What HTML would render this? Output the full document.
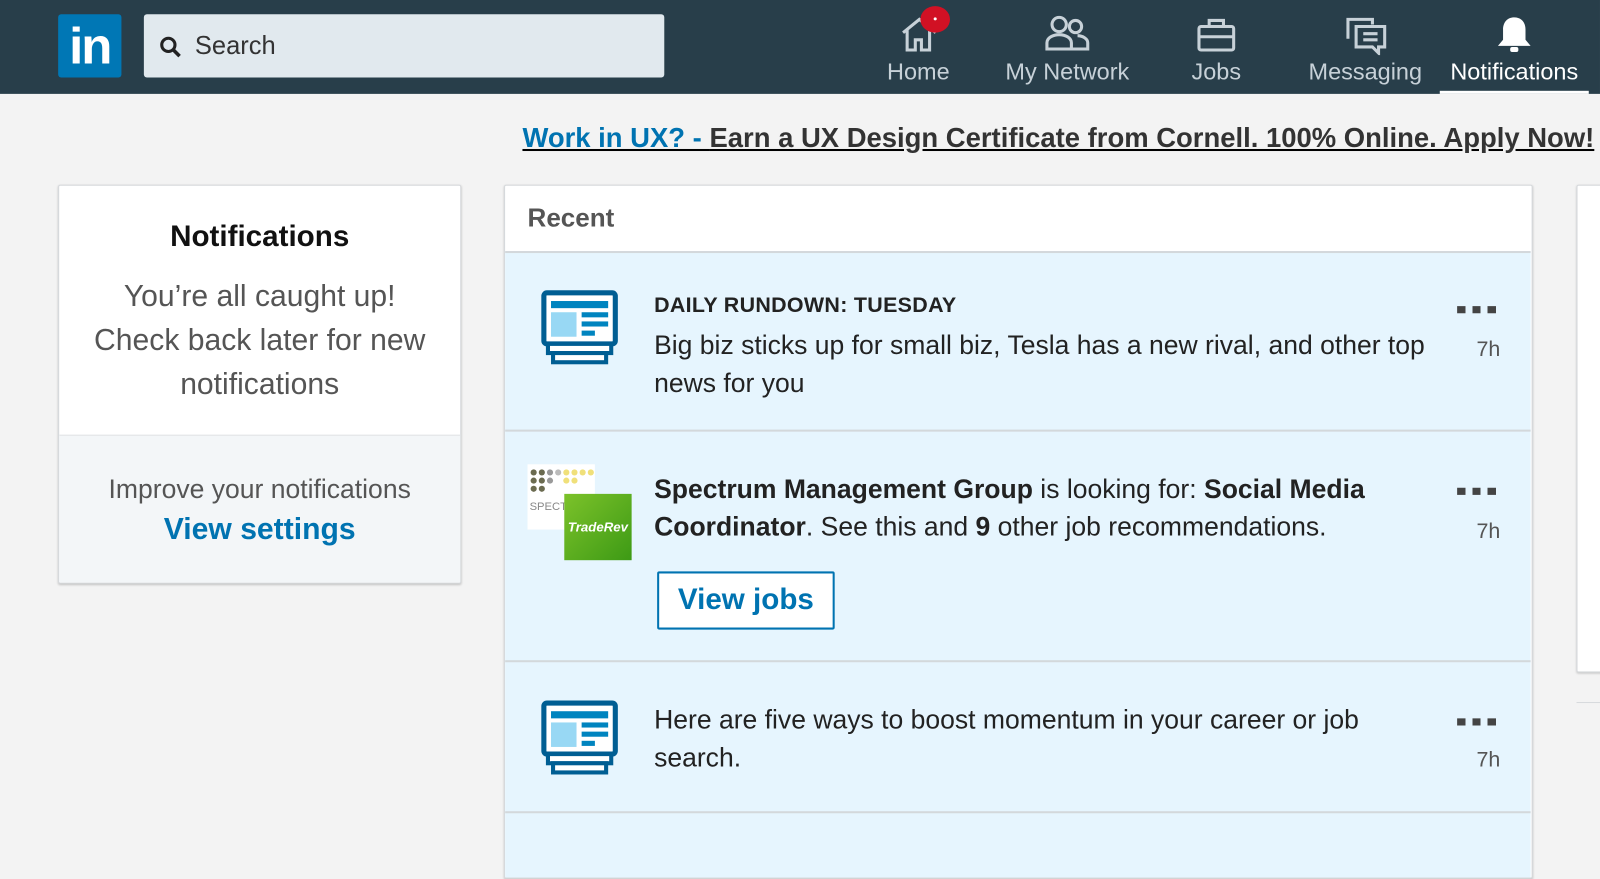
<!DOCTYPE html>
<html><head><meta charset="utf-8"><style>
*{box-sizing:border-box;margin:0;padding:0}
body{width:1600px;height:834px;overflow:hidden;background:#f3f3f3;font-family:"Liberation Sans",sans-serif;position:relative;color:#000}
#w{position:absolute;left:0;top:0;width:1568px;height:818px;transform:scale(1.0204);transform-origin:0 0}
.hdr{position:absolute;left:0;top:0;width:1568px;height:92px;background:#283e4a}
.logo{position:absolute;left:57px;top:14px;width:62px;height:62px;background:#0077b5;border-radius:3px;color:#fff;font-weight:bold;font-size:50px;line-height:62px;text-align:center;letter-spacing:-2px}
.search{position:absolute;left:141px;top:14px;width:510px;height:62px;background:#e1e9ee;border-radius:3px;font-size:25px;color:#333;line-height:62px;padding-left:50px}
.nav{position:absolute;top:57px;font-size:23px;color:#c7d1d8;text-align:center;white-space:nowrap}
.nav.act{color:#fff}
.ic{position:absolute}
.a{position:absolute}
.card{position:absolute;background:#fff;border:1px solid #d6d9dc;box-shadow:0 1px 2px rgba(0,0,0,.2);border-radius:2px}
.row{position:absolute;left:0;width:1005px;background:#e6f5fe;border-top:2px solid #d3d8db}
.t{position:absolute;left:146px;font-size:26px;line-height:37px;color:#222;width:765px}
.dots{position:absolute;left:933px;width:40px;height:7px;background:linear-gradient(90deg,#444 0 8px,transparent 8px 15px,#444 15px 23px,transparent 23px 30px,#444 30px 38px,transparent 38px)}
.tm{position:absolute;left:952px;font-size:21px;color:#555}
</style></head><body><div id="w">
<div class="hdr">
<div class="logo">in</div>
<div class="search"><svg class="ic" style="left:15px;top:21px" width="22" height="22" viewBox="0 0 22 22"><circle cx="9" cy="9" r="6.5" fill="none" stroke="#222" stroke-width="3"/><path d="M14 14l6 6" stroke="#222" stroke-width="3.5"/></svg>Search</div>
<svg class="ic" style="left:882px;top:16px" width="40" height="36" viewBox="0 0 40 36"><path d="M3 16L19 3l16 13M7 13v20h8v-10h6v10h8V13" fill="none" stroke="#c7d1d8" stroke-width="3"/></svg>
<div class="ic" style="left:902px;top:6px;width:29px;height:26px;border-radius:50%;background:#d11124"><div style="position:absolute;left:13px;top:11px;width:3px;height:3px;background:#fff;border-radius:50%"></div></div>
<div class="nav" style="left:860px;width:80px">Home</div>
<svg class="ic" style="left:1024px;top:15px" width="44" height="36" viewBox="0 0 44 36"><circle cx="14" cy="9" r="7" fill="none" stroke="#c7d1d8" stroke-width="3"/><path d="M2 33v-6c0-5 6-8 12-8s12 3 12 8v6z" fill="none" stroke="#c7d1d8" stroke-width="3"/><circle cx="30" cy="11" r="6" fill="none" stroke="#c7d1d8" stroke-width="3"/><path d="M26 33h16v-6c0-4-5-7-10-7" fill="none" stroke="#c7d1d8" stroke-width="3"/></svg>
<div class="nav" style="left:976px;width:140px">My Network</div>
<svg class="ic" style="left:1173px;top:17px" width="38" height="34" viewBox="0 0 38 34"><rect x="2" y="9" width="34" height="23" rx="2" fill="none" stroke="#c7d1d8" stroke-width="3"/><path d="M12 9V3h14v6M2 19h34" fill="none" stroke="#c7d1d8" stroke-width="3"/></svg>
<div class="nav" style="left:1152px;width:80px">Jobs</div>
<svg class="ic" style="left:1318px;top:16px" width="42" height="38" viewBox="0 0 42 38"><path d="M3 22V3h24v5" fill="none" stroke="#c7d1d8" stroke-width="3"/><path d="M11 10h28v20h-6v6l-6-6H11z" fill="none" stroke="#c7d1d8" stroke-width="3"/><path d="M18 17h14M18 23h14" stroke="#c7d1d8" stroke-width="3"/></svg>
<div class="nav" style="left:1278px;width:120px">Messaging</div>
<svg class="ic" style="left:1466px;top:15px" width="36" height="38" viewBox="0 0 36 38"><path d="M18 2c-7 0-11 5-11 12v10l-5 6h32l-5-6V14c0-7-4-12-11-12z" fill="#fff"/><rect x="14" y="31" width="8" height="5" rx="2" fill="#fff"/></svg>
<div class="nav act" style="left:1409px;width:150px">Notifications</div>
<div class="ic" style="left:1411px;top:89px;width:146px;height:3px;background:#fff"></div>
</div>
<div class="a" style="left:512px;top:120px;font-size:26.9px;font-weight:bold;white-space:nowrap;text-decoration:underline"><span style="color:#0073b1">Work in UX? - </span><span style="color:#333">Earn a UX Design Certificate from Cornell. 100% Online. Apply Now!</span></div>

<div class="card" style="left:57px;top:181px;width:395px;height:391px;overflow:hidden">
<div style="position:absolute;top:34px;width:100%;text-align:center;font-size:29px;font-weight:bold;color:#111">Notifications</div>
<div style="position:absolute;top:87px;width:100%;text-align:center;font-size:29.5px;line-height:43px;color:#555">You’re all caught up!<br>Check back later for new<br>notifications</div>
<div style="position:absolute;top:244px;left:0;width:100%;height:150px;background:#f3f6f8;border-top:1px solid #e0e3e5">
<div style="position:absolute;top:37px;width:100%;text-align:center;font-size:26px;color:#555">Improve your notifications</div>
<div style="position:absolute;top:75px;width:100%;text-align:center;font-size:29.5px;font-weight:bold;color:#0073b1">View settings</div></div>
</div>

<div class="card" style="left:494px;top:181px;width:1008px;height:680px;overflow:hidden">
<div style="position:absolute;left:22px;top:18px;font-size:25.5px;font-weight:bold;color:#555">Recent</div>
<div class="row" style="top:64px;height:177px">
<svg class="ic" style="left:35px;top:36px" width="76" height="74" viewBox="0 0 76 74"><rect x="3" y="3" width="70" height="50" rx="3" fill="#fff" stroke="#005e93" stroke-width="5"/><rect x="10" y="11" width="56" height="7" fill="#0084bf"/><rect x="10" y="22" width="25" height="24" fill="#98d8f4"/><rect x="40" y="22" width="26" height="5" fill="#0084bf"/><rect x="40" y="31" width="26" height="5" fill="#0084bf"/><rect x="40" y="40" width="13" height="5" fill="#0084bf"/><rect x="7" y="53" width="62" height="9" fill="#fff" stroke="#005e93" stroke-width="4"/><rect x="12" y="62" width="52" height="9" fill="#fff" stroke="#005e93" stroke-width="4"/></svg>
<div class="t" style="top:33px;font-size:21px;font-weight:bold;letter-spacing:.3px">DAILY RUNDOWN: TUESDAY</div>
<div class="t" style="top:72px">Big biz sticks up for small biz, Tesla has a new rival, and other top news for you</div>
<div class="dots" style="top:52px"></div>
<div class="tm" style="top:83px">7h</div>
</div>
<div class="row" style="top:239px;height:228px">
<div class="ic" style="left:22px;top:32px;width:66px;height:64px;background:#fff"><svg width="66" height="64"><g fill="#6b6b50"><circle cx="6" cy="8" r="3"/><circle cx="14" cy="8" r="3"/><circle cx="22" cy="8" r="3" fill="#999"/><circle cx="30" cy="8" r="3" fill="#bbb"/><circle cx="6" cy="16" r="3"/><circle cx="14" cy="16" r="3"/><circle cx="22" cy="16" r="3" fill="#999"/><circle cx="6" cy="24" r="3"/><circle cx="14" cy="24" r="3"/></g><g fill="#f0e07a"><circle cx="38" cy="8" r="3"/><circle cx="46" cy="8" r="3"/><circle cx="54" cy="8" r="3"/><circle cx="62" cy="8" r="3"/><circle cx="38" cy="16" r="3"/><circle cx="46" cy="16" r="3"/></g><text x="2" y="45" font-size="11" fill="#888" font-family="Liberation Sans">SPECT</text></svg></div>
<div class="ic" style="left:58px;top:61px;width:66px;height:65px;background:linear-gradient(135deg,#7cc22a,#3d9a15);color:#fff;font-size:13px;font-weight:bold;font-style:italic;line-height:65px;text-align:center">TradeRev</div>
<div class="t" style="top:38px"><b>Spectrum Management Group</b> is looking for: <b>Social Media Coordinator</b>. See this and <b>9</b> other job recommendations.</div>
<div class="ic" style="left:149px;top:137px;width:174px;height:57px;border:2px solid #0073b1;border-radius:2px;background:#fff;color:#0073b1;font-size:29px;font-weight:bold;text-align:center;line-height:53px">View jobs</div>
<div class="dots" style="top:55px"></div>
<div class="tm" style="top:86px">7h</div>
</div>
<div class="row" style="top:465px;height:150px">
<svg class="ic" style="left:35px;top:37px" width="76" height="74" viewBox="0 0 76 74"><rect x="3" y="3" width="70" height="50" rx="3" fill="#fff" stroke="#005e93" stroke-width="5"/><rect x="10" y="11" width="56" height="7" fill="#0084bf"/><rect x="10" y="22" width="25" height="24" fill="#98d8f4"/><rect x="40" y="22" width="26" height="5" fill="#0084bf"/><rect x="40" y="31" width="26" height="5" fill="#0084bf"/><rect x="40" y="40" width="13" height="5" fill="#0084bf"/><rect x="7" y="53" width="62" height="9" fill="#fff" stroke="#005e93" stroke-width="4"/><rect x="12" y="62" width="52" height="9" fill="#fff" stroke="#005e93" stroke-width="4"/></svg>
<div class="t" style="top:38px">Here are five ways to boost momentum in your career or job search.</div>
<div class="dots" style="top:55px"></div>
<div class="tm" style="top:84px">7h</div>
</div>
<div class="row" style="top:613px;height:80px"></div>
</div>
<div class="card" style="left:1545px;top:181px;width:80px;height:478px"></div>
<div class="a" style="left:1545px;top:688px;width:60px;height:1px;background:#d6d9dc"></div>
</div></body></html>
